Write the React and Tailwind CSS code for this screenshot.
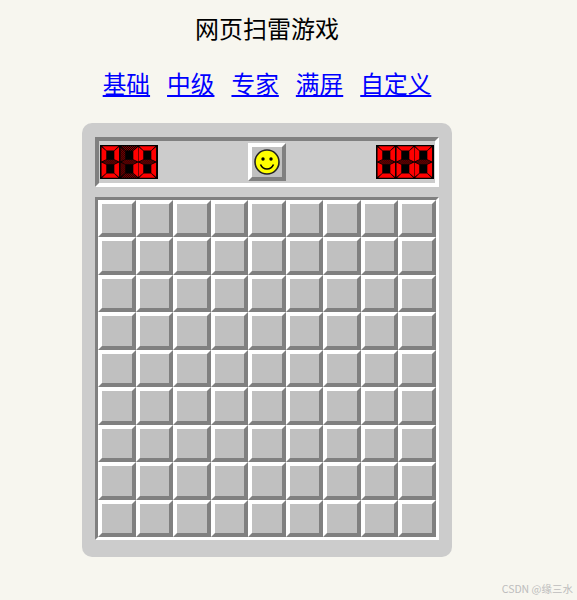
const cells = Array.from({ length: 81 }, (_, i) => i)

const links = ['基础', '中级', '专家', '满屏', '自定义']

// segment order: top, upper left, upper right, middle, lower left, lower right, bottom
const segments = [
  '0.7,0.2 12.3,0.2 9.2,3.2 3.8,3.2',
  '0.2,0.7 3.6,3.6 3.6,9.6 0.2,11.2',
  '12.8,0.7 9.4,3.6 9.4,9.6 12.8,11.2',
  '1,11.5 3.6,9.9 9.4,9.9 12,11.5 9.4,13.1 3.6,13.1',
  '0.2,11.8 3.6,13.4 3.6,19.4 0.2,22.3',
  '12.8,11.8 9.4,13.4 9.4,19.4 12.8,22.3',
  '3.8,19.8 9.2,19.8 12.3,22.8 0.7,22.8',
]

const digitMap = {
  0: [1, 1, 1, 0, 1, 1, 1],
  1: [0, 0, 1, 0, 0, 1, 0],
}

function Digit({ value }) {
  const lit = digitMap[value]
  return (
    <svg width="18.6" height="32" viewBox="0 0 13 23" className="block">
      <defs>
        <pattern id={'dim' + value} width="1.4" height="1.4" patternUnits="userSpaceOnUse">
          <rect width="1.4" height="1.4" fill="#000" />
          <rect width="0.7" height="0.7" fill="#a00000" />
          <rect x="0.7" y="0.7" width="0.7" height="0.7" fill="#a00000" />
        </pattern>
      </defs>
      {segments.map((points, i) => (
        <polygon key={i} points={points} fill={lit[i] ? '#ff0000' : `url(#dim${value})`} />
      ))}
    </svg>
  )
}

function Counter({ digits }) {
  return (
    <div className="flex w-[58px] h-[34px] bg-black items-center justify-center">
      {digits.map((d, i) => (
        <Digit key={i} value={d} />
      ))}
    </div>
  )
}

function Smiley() {
  return (
    <svg width="26" height="26" viewBox="0 0 26 26" className="block">
      <circle cx="13" cy="13" r="12" fill="#ffff00" stroke="#222" strokeWidth="1.6" />
      <circle cx="9" cy="10" r="1.7" fill="#000" />
      <circle cx="17" cy="10" r="1.7" fill="#000" />
      <path d="M6.5 15.5 Q8.5 20 13 20 Q17.5 20 19.5 15.5" fill="none" stroke="#000" strokeWidth="1.6" />
    </svg>
  )
}

export default function App() {
  return (
    <div className="relative min-h-screen h-[600px] overflow-hidden bg-[#f7f6ef] font-['Noto_Sans_CJK_SC','Liberation_Sans',sans-serif]">
      <div className="w-[534px] flex flex-col items-center">
        <h1 className="mt-[10px] h-[36px] text-[24px] leading-[36px] font-normal text-black">网页扫雷游戏</h1>
        <div className="mt-[19px] h-[36px] flex gap-[17px] text-[23.7px] leading-[36px]">
          {links.map(name => (
            <a key={name} href="#" className="text-[#0000ff] underline">
              {name}
            </a>
          ))}
        </div>
        <div className="mt-[22px] w-[370px] h-[434px] rounded-[10px] bg-[#cccccc] pt-[14px] px-[13px]">
          <div className="h-[50px] flex items-center justify-between px-[1px] border-[4px] border-t-[#808080] border-l-[#808080] border-r-white border-b-white">
            <Counter digits={[0, 1, 0]} />
            <button className="w-[38px] h-[38px] flex items-center justify-center bg-[#c0c0c0] border-[4px] border-t-white border-l-white border-r-[#808080] border-b-[#808080]">
              <Smiley />
            </button>
            <Counter digits={[0, 0, 0]} />
          </div>
          <div className="mt-[10px] w-[344px] h-[343px] border-[3px] border-t-[#808080] border-l-[#808080] border-r-white border-b-white">
            <div className="grid grid-cols-9 grid-rows-9 w-full h-full">
              {cells.map(i => (
                <div key={i} className="bg-[#c0c0c0] border-[4px] border-t-white border-l-white border-r-[#808080] border-b-[#808080]" />
              ))}
            </div>
          </div>
        </div>
      </div>
      <span className="absolute right-[4px] bottom-[4px] text-[10.5px] leading-[14px] text-[#bdbdbd]">CSDN @缘三水</span>
    </div>
  )
}
